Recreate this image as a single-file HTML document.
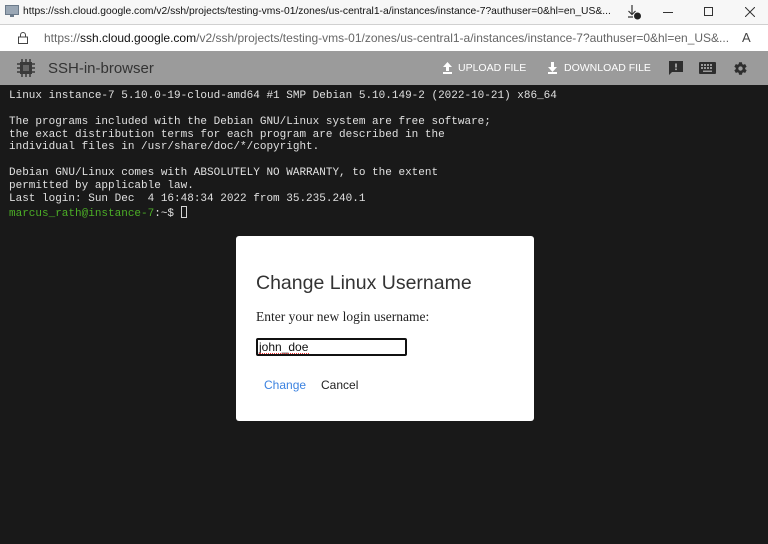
<!DOCTYPE html>
<html><head><meta charset="utf-8"><style>
*{margin:0;padding:0;box-sizing:border-box}
body{width:768px;height:544px;overflow:hidden;background:#191919;font-family:"Liberation Sans",sans-serif;position:relative}
.title{position:absolute;left:0;top:0;width:768px;height:25px;background:#f7f7f7;border-bottom:1px solid #d0d0d0}
.addr{position:absolute;left:0;top:25px;width:768px;height:26px;background:#fff}
.tool{position:absolute;left:0;top:51px;width:768px;height:34px;background:#9b9b9b}
.term{position:absolute;left:9px;top:90px;font-family:"Liberation Mono",monospace;font-size:11px;line-height:12.85px;color:#e0e0e0;white-space:pre}
.g{color:#4caf26}
.dlg{position:absolute;left:236px;top:236px;width:298px;height:185px;background:#fff;border-radius:3px}
.t{position:absolute;font-size:12px;color:#222;white-space:nowrap}
.tb{position:absolute;color:#fff;font-size:10.5px;white-space:nowrap;top:62px}
</style></head><body>
<div class="title">
 <svg style="position:absolute;left:5px;top:5px" width="14" height="13"><rect x="0.5" y="0.5" width="13" height="9" fill="#9aa7b5" stroke="#6b7a8a"/><rect x="5" y="10" width="4" height="2" fill="#6b7a8a"/></svg>
 <div class="t" style="left:23px;top:6px;font-size:10.3px;color:#111">https://ssh.cloud.google.com/v2/ssh/projects/testing-vms-01/zones/us-central1-a/instances/instance-7?authuser=0&amp;hl=en_US&amp;...</div>
 <svg style="position:absolute;left:627px;top:5px" width="16" height="16"><path d="M5 0v9M1.5 6L5 9.5 8.5 6M1 12h5" fill="none" stroke="#333" stroke-width="1.2"/><circle cx="10.5" cy="11" r="3.5" fill="#222"/></svg>
 <div style="position:absolute;left:663px;top:12px;width:10px;height:1px;background:#333"></div>
 <div style="position:absolute;left:704px;top:7px;width:9px;height:9px;border:1px solid #333"></div>
 <svg style="position:absolute;left:745px;top:7px" width="10" height="10"><path d="M0 0L10 10M10 0L0 10" stroke="#333" stroke-width="1"/></svg>
</div>
<div class="addr">
 <svg style="position:absolute;left:18px;top:6px" width="10" height="13"><path d="M2.5 6V4a2.5 2.5 0 0 1 5 0v2" fill="none" stroke="#444"/><rect x="0.5" y="6" width="9" height="6.5" fill="none" stroke="#444"/></svg>
 <div class="t" style="left:44px;top:6px;font-size:12px;color:#666">https://<span style="color:#111">ssh.cloud.google.com</span>/v2/ssh/projects/testing-vms-01/zones/us-central1-a/instances/instance-7?authuser=0&amp;hl=en_US&amp;...</div>
 <div class="t" style="left:742px;top:5px;font-size:13px;color:#444">A</div>
</div>
<div class="tool">
 <svg style="position:absolute;left:16px;top:7px" width="20" height="20" viewBox="0 0 20 20"><rect x="4" y="4" width="12" height="12" fill="#3a3a3a"/><rect x="7" y="7" width="6" height="6" fill="#666"/><g stroke="#3a3a3a" stroke-width="1.5"><path d="M1 6h3M1 10h3M1 14h3M16 6h3M16 10h3M16 14h3M6 1v3M10 1v3M14 1v3M6 16v3M10 16v3M14 16v3"/></g></svg>
 <div class="t" style="left:48px;top:9px;font-size:15px;color:#333">SSH-in-browser</div>
</div>
<svg style="position:absolute;left:442px;top:62px" width="11" height="12"><path d="M5.5 0L1 5h3v4h3V5h3z M1 10h9v2H1z" fill="#fff"/></svg>
<div class="tb" style="left:458px">UPLOAD FILE</div>
<svg style="position:absolute;left:547px;top:62px" width="11" height="12"><path d="M4 0h3v5h3L5.5 10 1 5h3z M1 10h9v2H1z" fill="#fff"/></svg>
<div class="tb" style="left:564px">DOWNLOAD FILE</div>
<svg style="position:absolute;left:669px;top:61px" width="14" height="14"><path d="M0 0h14v11H3l-3 3z" fill="#2e2e2e"/><rect x="6" y="2.5" width="2" height="4" fill="#9b9b9b"/><rect x="6" y="7.5" width="2" height="1.6" fill="#9b9b9b"/></svg>
<svg style="position:absolute;left:699px;top:62px" width="17" height="12"><rect width="17" height="12" rx="1" fill="#2e2e2e"/><g fill="#9b9b9b"><rect x="2" y="2" width="2" height="2"/><rect x="5" y="2" width="2" height="2"/><rect x="8" y="2" width="2" height="2"/><rect x="11" y="2" width="2" height="2"/><rect x="2" y="5" width="2" height="2"/><rect x="5" y="5" width="2" height="2"/><rect x="8" y="5" width="2" height="2"/><rect x="11" y="5" width="2" height="2"/><rect x="4" y="8.5" width="9" height="1.5"/></g></svg>
<svg style="position:absolute;left:733px;top:61px" width="15" height="15" viewBox="0 0 24 24"><path fill="#2e2e2e" d="M19.4 13c.04-.3.06-.65.06-1s-.02-.7-.06-1l2.1-1.650c.2-.15.24-.42.12-.64l-2-3.46c-.12-.22-.4-.3-.6-.22l-2.5 1c-.52-.4-1.080-.73-1.7-.98L14.4 2.4A.5.5 0 0 0 14 2h-4a.5.5 0 0 0-.5.42l-.38 2.65c-.6.25-1.17.58-1.7.98l-2.5-1c-.22-.08-.48 0-.6.22l-2 3.46c-.13.22-.07.5.12.64L4.54 11c-.04.32-.06.66-.06 1s.02.7.06 1l-2.1 1.65c-.2.15-.24.42-.12.64l2 3.46c.12.22.4.3.6.22l2.5-1c.52.4 1.08.73 1.7.98l.38 2.650c.04.24.25.42.5.42h4c.25 0 .46-.18.5-.42l.37-2.65c.6-.25 1.17-.58 1.7-.98l2.5 1c.22.08.48 0 .6-.22l2-3.46c.12-.22.07-.5-.12-.64zM12 15.5a3.5 3.5 0 1 1 0-7 3.5 3.5 0 0 1 0 7z"/></svg>
<div class="term">Linux instance-7 5.10.0-19-cloud-amd64 #1 SMP Debian 5.10.149-2 (2022-10-21) x86_64

The programs included with the Debian GNU/Linux system are free software;
the exact distribution terms for each program are described in the
individual files in /usr/share/doc/*/copyright.

Debian GNU/Linux comes with ABSOLUTELY NO WARRANTY, to the extent
permitted by applicable law.
Last login: Sun Dec  4 16:48:34 2022 from 35.235.240.1
<span class="g">marcus_rath@instance-7</span>:~$ <span style="display:inline-block;width:6px;height:12px;border:1px solid #d4d4d4;vertical-align:-2px"></span></div>
<div class="dlg">
 <div class="t" style="left:20px;top:36px;font-size:19.5px;color:#333">Change Linux Username</div>
 <div class="t" style="left:20px;top:73px;font-family:'Liberation Serif',serif;font-size:13.5px;color:#222">Enter your new login username:</div>
 <div style="position:absolute;left:20px;top:102px;width:151px;height:18px;border:2px solid #111;border-radius:2px"></div>
 <div class="t" style="left:23px;top:104px;font-size:12px;color:#111">john_doe<div style="position:absolute;left:0;top:13px;width:50px;height:1px;border-bottom:1px dotted #e33"></div></div>
 <div class="t" style="left:28px;top:142px;font-size:12px;color:#3b82e0">Change</div>
 <div class="t" style="left:85px;top:142px;font-size:12px;color:#222">Cancel</div>
</div>
</body></html>
